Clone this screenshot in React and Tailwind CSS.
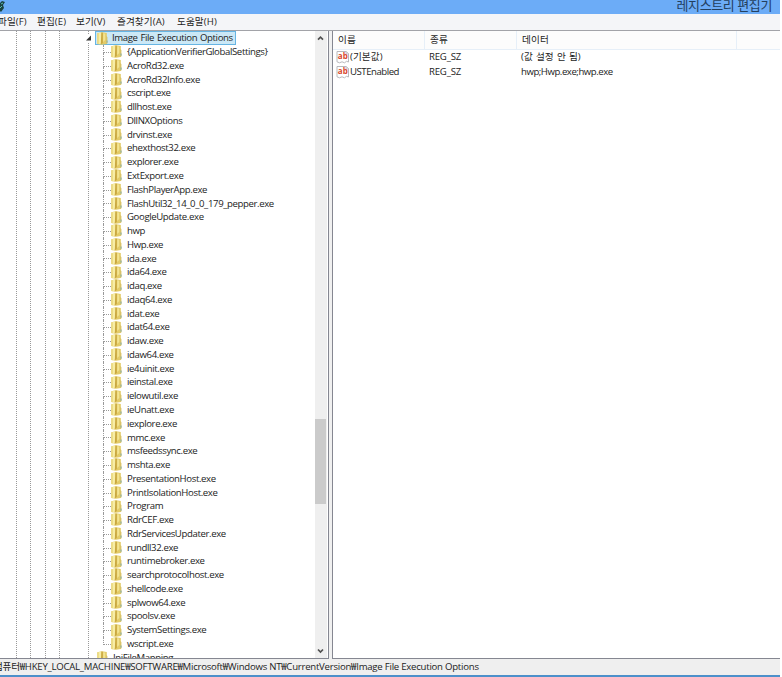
import React from 'react';
import clsx from 'clsx';

const menus = [
    { label: '파일(F)', className: 'w-[39px]' },
    { label: '편집(E)', className: 'w-[39px]' },
    { label: '보기(V)', className: 'w-[41px]' },
    { label: '즐겨찾기(A)', className: 'w-[60px]' },
    { label: '도움말(H)', className: 'w-[50px]' },
];

const keys = [
    '{ApplicationVerifierGlobalSettings}',
    'AcroRd32.exe',
    'AcroRd32Info.exe',
    'cscript.exe',
    'dllhost.exe',
    'DllNXOptions',
    'drvinst.exe',
    'ehexthost32.exe',
    'explorer.exe',
    'ExtExport.exe',
    'FlashPlayerApp.exe',
    'FlashUtil32_14_0_0_179_pepper.exe',
    'GoogleUpdate.exe',
    'hwp',
    'Hwp.exe',
    'ida.exe',
    'ida64.exe',
    'idaq.exe',
    'idaq64.exe',
    'idat.exe',
    'idat64.exe',
    'idaw.exe',
    'idaw64.exe',
    'ie4uinit.exe',
    'ieinstal.exe',
    'ielowutil.exe',
    'ieUnatt.exe',
    'iexplore.exe',
    'mmc.exe',
    'msfeedssync.exe',
    'mshta.exe',
    'PresentationHost.exe',
    'PrintIsolationHost.exe',
    'Program',
    'RdrCEF.exe',
    'RdrServicesUpdater.exe',
    'rundll32.exe',
    'runtimebroker.exe',
    'searchprotocolhost.exe',
    'shellcode.exe',
    'splwow64.exe',
    'spoolsv.exe',
    'SystemSettings.exe',
    'wscript.exe',
];

const values = [
    { name: '(기본값)', type: 'REG_SZ', data: '(값 설정 안 됨)', className: 'tracking-[0.1px]' },
    { name: 'USTEnabled', type: 'REG_SZ', data: 'hwp;Hwp.exe;hwp.exe', className: 'tracking-[-0.46px]' },
];

const FolderIcon = () => (
    <svg width="11" height="13" viewBox="0 0 11 13" className="shrink-0">
        <path d="M0.3 1.2 L5 0.2 L9.8 1 V12 L5 12.8 L0.3 12 Z" fill="#e3cb68" />
        <path d="M0.3 1.2 L1.8 1 V12.2 L0.3 12 Z" fill="#ecdb83" />
        <path d="M1.8 1 L4.4 0.6 V9 L3.6 12.2 L1.8 12 Z" fill="#f7eda6" />
        <path d="M4.4 0.6 L5.8 0.8 V11 L3.8 12.4 Z" fill="#c9a740" />
        <path d="M6.2 1.2 L8.2 1.4 V8 L6.2 10 Z" fill="#f3e491" />
        <path d="M9 4 L10.4 5 V11.6 L9 12 Z" fill="#d9c368" />
        <rect x="9.3" y="8.5" width="1.4" height="2.2" fill="#9cb7a0" />
    </svg>
);

const StringIcon = () => (
    <svg width="14" height="14" viewBox="0 0 14 14" className="shrink-0">
        <path d="M1 1.5 H10 L12.5 3.5 V12 L10.5 11.3 L8.5 12.8 L6 11.8 L3.5 12.8 L1 11.8 Z" fill="#fff" stroke="#b9b9bd" />
        <path d="M10 1.5 V4 H12.5" fill="none" stroke="#b9b9bd" strokeWidth="0.8" />
        <text x="1.8" y="9" fontSize="8" fontWeight="700" fontFamily="Open Sans, sans-serif" letterSpacing="0" fill="#d9472b">ab</text>
    </svg>
);

const Guide = ({ className }) => (
    <div className={clsx('shrink-0 border-l border-dotted border-[#999]', className)} />
);

const TreeRow = ({ label, last }) => (
    <div className="flex h-[13.767px] shrink-0 items-center">
        <div className="flex h-full w-[8px] shrink-0 flex-col">
            <div className="h-[8px] border-b border-l border-dotted border-[#999]" />
            <div className={clsx('flex-1 border-l border-dotted', last ? 'border-transparent' : 'border-[#999]')} />
        </div>
        <FolderIcon />
        <span className="ml-[5px] whitespace-nowrap">{label}</span>
    </div>
);

const Tree = () => (
    <div className="flex h-[628px] w-[329px] shrink-0 overflow-hidden border-r border-b border-[#858791] bg-white">
        <div className="flex w-[315px] overflow-hidden pl-4">
            <Guide className="w-[14px]" />
            <Guide className="w-[15px]" />
            <Guide className="w-[14px]" />
            <Guide className="w-[29px]" />
            <Guide className="w-px" />
            <div className="-ml-1 flex flex-col">
                <div className="flex h-[14px] shrink-0 items-center">
                    <svg width="8" height="8" viewBox="0 0 8 8" className="shrink-0 bg-white">
                        <path d="M6 1.5 V6.5 H1 Z" fill="#333" />
                    </svg>
                    <div className="ml-0.5 flex h-[14px] w-[141px] items-center border border-[#66b5e3] bg-[#cbe8f6] pl-px">
                        <FolderIcon />
                        <span className="ml-1 whitespace-nowrap [word-spacing:0.7px]">Image File Execution Options</span>
                    </div>
                </div>
                <div className="flex shrink-0 flex-col pl-[18px]">
                    {keys.map((key, i) => (
                        <TreeRow key={key} label={key} last={i === keys.length - 1} />
                    ))}
                </div>
                <div className="flex h-[14px] shrink-0 items-center pl-3">
                    <FolderIcon />
                    <span className="ml-[5px] whitespace-nowrap">IniFileMapping</span>
                </div>
            </div>
        </div>
        <div className="flex w-[12px] flex-col items-center bg-[#efefef]">
            <svg width="12" height="14" viewBox="0 0 12 14">
                <path d="M3 8.7 L5.5 6.2 L8 8.7" fill="none" stroke="#505050" strokeWidth="1.7" />
            </svg>
            <div className="mt-[374px] h-[85px] w-[11px] self-start bg-[#cbcbcb]" />
            <svg width="12" height="14" viewBox="0 0 12 14" className="mt-auto">
                <path d="M3 5.5 L5.5 8 L8 5.5" fill="none" stroke="#505050" strokeWidth="1.7" />
            </svg>
        </div>
    </div>
);

const ValueList = () => (
    <div className="h-[628px] flex-1 border-b border-l border-[#858791] bg-white tracking-[-0.2px]">
        <div className="flex h-[19px] items-center border-b border-[#e6eff8] bg-[#fcfcfc] tracking-[0.2px]">
            <div className="flex h-full w-[92px] items-center border-r border-[#e6eff8] pl-[5px]">이름</div>
            <div className="flex h-full w-[92px] items-center border-r border-[#e6eff8] pl-[5px]">종류</div>
            <div className="flex h-full w-[220px] items-center border-r border-[#e6eff8] pl-[5px]">데이터</div>
        </div>
        {values.map((value) => (
            <div key={value.name} className="flex h-[14.5px] items-center whitespace-nowrap">
                <div className="flex w-[96px] items-center pl-[3px]">
                    <StringIcon />
                    <span className={value.className}>{value.name}</span>
                </div>
                <div className="w-[92px]">{value.type}</div>
                <div className={clsx('[word-spacing:0.5px]', value.className)}>{value.data}</div>
            </div>
        ))}
    </div>
);

const App = () => {
    return (
        <div className="h-[677px] w-[782px] overflow-hidden bg-white">
            <div className="flex h-full w-[780px] flex-col bg-[#f0f0f0] font-['Open_Sans','Noto_Sans_CJK_KR',sans-serif] text-[9.6px] leading-none tracking-[-0.38px] text-[#1c1c1c]">
                <div className="flex h-[14px] shrink-0 items-start justify-between bg-[#6cacf7]">
                    <svg width="6" height="14" viewBox="0 0 6 14">
                        <path d="M0 3 L2 1 L5 2 L3 5 L4 8 L1 12 L0 11 Z" fill="#1b4340" />
                        <path d="M1 4 L3 3 M0 8 L2 6" stroke="#58bdb7" />
                    </svg>
                    <span className="-mt-[3px] mr-[8px] whitespace-nowrap text-[13px] leading-4 tracking-[-0.4px] text-[#23405f]">레지스트리 편집기</span>
                </div>
                <div className="flex h-[16px] shrink-0 items-center bg-[#f4f5f8] whitespace-nowrap tracking-[0.1px]">
                    <div className="-ml-[2px] flex">
                        {menus.map((menu) => (
                            <div key={menu.label} className={menu.className}>{menu.label}</div>
                        ))}
                    </div>
                </div>
                <div className="flex h-[629px] shrink-0 justify-between border-t border-[#a2a3a8]">
                    <Tree />
                    <div className="w-[3px]" />
                    <ValueList />
                </div>
                <div className="flex h-[18px] shrink-0 items-center border-b-2 border-[#4d90ca] bg-[#efefef] whitespace-nowrap">
                    <span className="-ml-[6px] tracking-[-0.24px]">컴퓨터₩HKEY_LOCAL_MACHINE₩SOFTWARE₩Microsoft₩Windows NT₩CurrentVersion₩Image File Execution Options</span>
                </div>
            </div>
        </div>
    );
};

export default App;
